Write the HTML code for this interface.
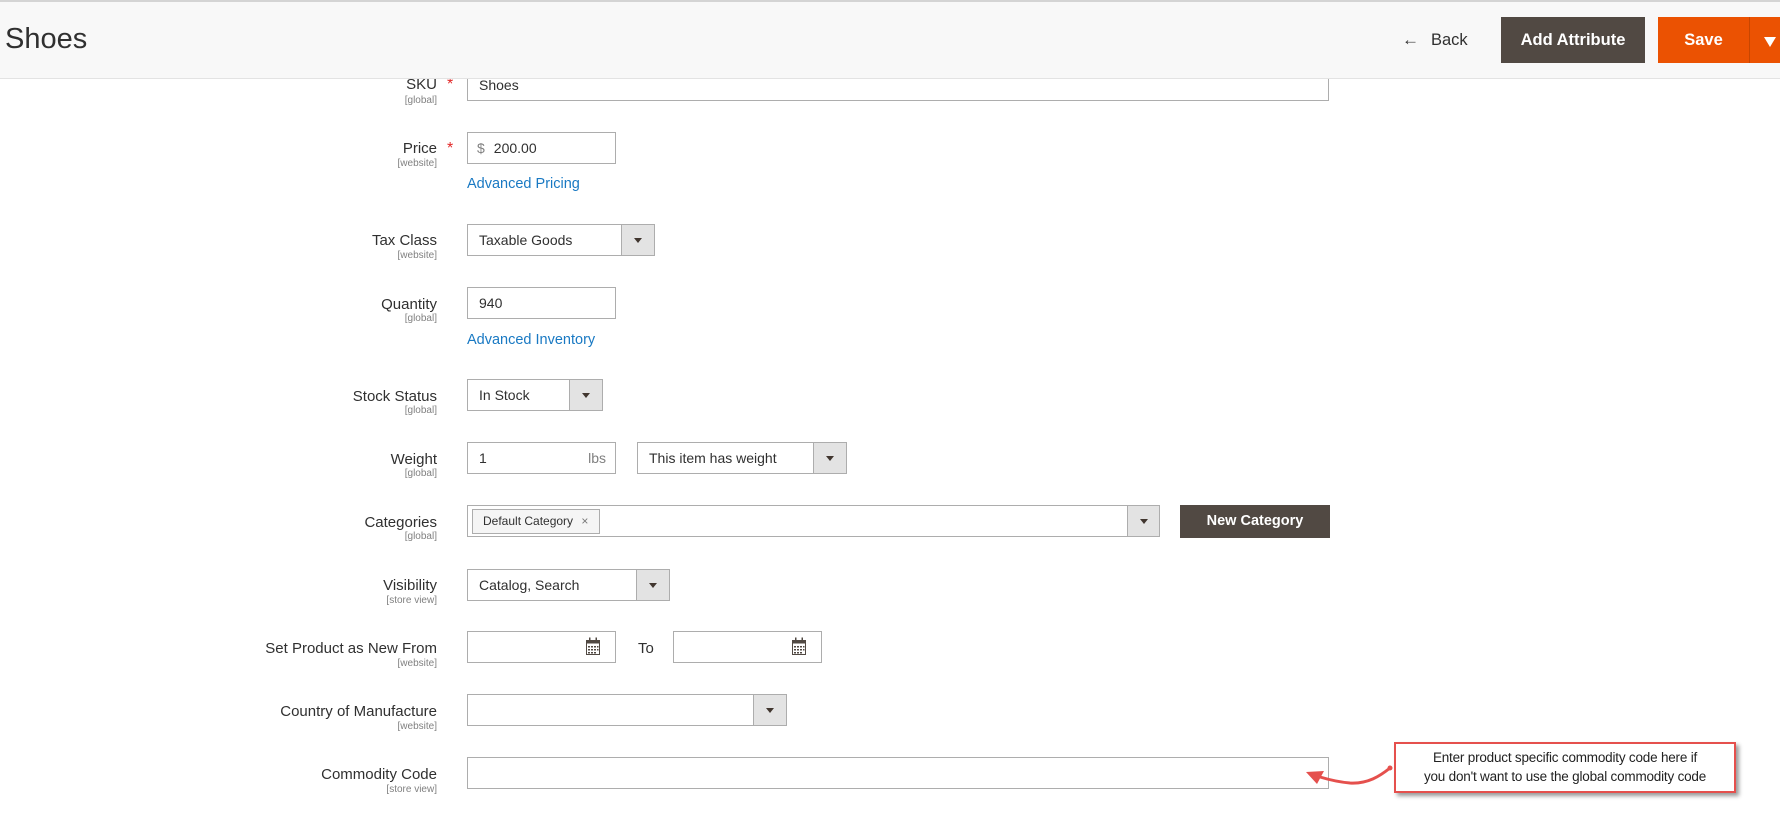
<!DOCTYPE html>
<html><head><meta charset="utf-8"><style>
*{box-sizing:border-box;margin:0;padding:0}
body{width:1780px;height:818px;overflow:hidden;background:#fff;font-family:"Liberation Sans",sans-serif;color:#303030;position:relative}
.hdr{position:absolute;left:0;top:0;width:1780px;height:79px;background:#f8f8f8;border-top:2px solid #d4d4d4;border-bottom:1px solid #e3e3e3;z-index:5}
.title{position:absolute;left:5px;top:21px;font-size:29px;color:#303030}
.back{position:absolute;left:1402px;top:28px;font-size:16.5px;color:#303030;white-space:nowrap}
.btn{position:absolute;color:#fff;font-weight:bold;font-size:16.5px;text-align:center;white-space:nowrap}
.abs{position:absolute}
.lbl{position:absolute;right:1343px;text-align:right;font-size:15px;color:#303030;white-space:nowrap}
.scope{position:absolute;right:1343px;text-align:right;font-size:10px;color:#808080;white-space:nowrap}
.in{position:absolute;border:1px solid #adadad;background:#fff;height:32px;font-size:14px;line-height:30px;padding-left:11px;white-space:nowrap}
.sel{position:absolute;border:1px solid #adadad;background:#fff;height:32px;font-size:14px;line-height:30px;padding-left:11px;white-space:nowrap}
.sel .ar{position:absolute;right:0;top:0;bottom:0;background:#e3e3e3;border-left:1px solid #adadad}
.sel .ar:after{content:"";position:absolute;left:50%;top:50%;margin:-2px 0 0 -4px;border-left:4px solid transparent;border-right:4px solid transparent;border-top:5px solid #41362f}
.link{position:absolute;left:467px;font-size:14.5px;color:#1979c3}
.req{color:#e22626;font-size:16px;position:absolute;left:447px}
</style></head><body>
<div class="hdr">
<div class="title">Shoes</div>
<div class="back"><span style="font-size:17px;margin-right:12px">&#8592;</span>Back</div>
<div class="btn" style="left:1501px;top:15px;width:144px;height:46px;line-height:46px;background:#514943">Add Attribute</div>
<div class="btn" style="left:1658px;top:15px;width:122px;height:46px;background:#eb5202"><span style="position:absolute;left:0;width:91px;line-height:46px">Save</span><span style="position:absolute;left:91px;top:0;width:1px;height:46px;background:#c84600"></span><span style="position:absolute;left:106px;top:20px;border-left:6px solid transparent;border-right:6px solid transparent;border-top:10px solid #fff"></span></div>
</div>

<!-- SKU -->
<div class="lbl" style="top:76px">SKU</div><span class="req" style="top:76px">*</span>
<div class="scope" style="top:95px">[global]</div>
<div class="in" style="left:467px;top:69px;width:862px">Shoes</div>

<!-- Price -->
<div class="lbl" style="top:140px">Price</div><span class="req" style="top:140px">*</span>
<div class="scope" style="top:158px">[website]</div>
<div class="in" style="left:467px;top:132px;width:149px;padding-left:9px"><span style="color:#808080;margin-right:9px">$</span>200.00</div>
<div class="link" style="top:176px">Advanced Pricing</div>

<!-- Tax -->
<div class="lbl" style="top:232px">Tax Class</div>
<div class="scope" style="top:250px">[website]</div>
<div class="sel" style="left:467px;top:224px;width:188px">Taxable Goods<div class="ar" style="width:33px"></div></div>

<!-- Qty -->
<div class="lbl" style="top:296px">Quantity</div>
<div class="scope" style="top:313px">[global]</div>
<div class="in" style="left:467px;top:287px;width:149px">940</div>
<div class="link" style="top:332px">Advanced Inventory</div>

<!-- Stock -->
<div class="lbl" style="top:388px">Stock Status</div>
<div class="scope" style="top:405px">[global]</div>
<div class="sel" style="left:467px;top:379px;width:136px">In Stock<div class="ar" style="width:33px"></div></div>

<!-- Weight -->
<div class="lbl" style="top:451px">Weight</div>
<div class="scope" style="top:468px">[global]</div>
<div class="in" style="left:467px;top:442px;width:149px">1<span style="position:absolute;right:9px;color:#808080">lbs</span></div>
<div class="sel" style="left:637px;top:442px;width:210px">This item has weight<div class="ar" style="width:33px"></div></div>

<!-- Categories -->
<div class="lbl" style="top:514px">Categories</div>
<div class="scope" style="top:531px">[global]</div>
<div class="sel" style="left:467px;top:505px;width:693px"><div class="ar" style="width:32px"></div></div>
<div class="abs" style="left:472px;top:509px;width:128px;height:25px;border:1px solid #adadad;background:#f5f5f5;font-size:12px;line-height:23px;padding-left:10px;color:#303030;white-space:nowrap">Default Category <span style="color:#777;margin-left:5px">×</span></div>
<div class="btn" style="left:1180px;top:505px;width:150px;height:33px;line-height:33px;background:#514943;font-size:14.5px">New Category</div>

<!-- Visibility -->
<div class="lbl" style="top:577px">Visibility</div>
<div class="scope" style="top:595px">[store view]</div>
<div class="sel" style="left:467px;top:569px;width:203px">Catalog, Search<div class="ar" style="width:33px"></div></div>

<!-- New from -->
<div class="lbl" style="top:640px">Set Product as New From</div>
<div class="scope" style="top:658px">[website]</div>
<div class="in" style="left:467px;top:631px;width:149px"></div>
<div class="abs" style="left:638px;top:640px;font-size:15px">To</div>
<div class="in" style="left:673px;top:631px;width:149px"></div>
<svg class="abs" style="left:586px;top:637px" width="14" height="18" viewBox="0 0 14 18"><rect x="0.5" y="3.5" width="13" height="14" fill="#fff" stroke="#514943"/><rect x="0.5" y="3.5" width="13" height="3" fill="#514943"/><rect x="3" y="0.5" width="1.5" height="5" fill="#514943"/><rect x="9.5" y="0.5" width="1.5" height="5" fill="#514943"/><g fill="#514943"><rect x="2" y="9" width="2" height="1.5"/><rect x="5" y="9" width="2" height="1.5"/><rect x="8" y="9" width="2" height="1.5"/><rect x="11" y="9" width="1.5" height="1.5"/><rect x="2" y="12" width="2" height="1.5"/><rect x="5" y="12" width="2" height="1.5"/><rect x="8" y="12" width="2" height="1.5"/><rect x="11" y="12" width="1.5" height="1.5"/><rect x="2" y="15" width="2" height="1.5"/><rect x="5" y="15" width="2" height="1.5"/><rect x="8" y="15" width="2" height="1.5"/></g></svg>
<svg class="abs" style="left:792px;top:637px" width="14" height="18" viewBox="0 0 14 18"><rect x="0.5" y="3.5" width="13" height="14" fill="#fff" stroke="#514943"/><rect x="0.5" y="3.5" width="13" height="3" fill="#514943"/><rect x="3" y="0.5" width="1.5" height="5" fill="#514943"/><rect x="9.5" y="0.5" width="1.5" height="5" fill="#514943"/><g fill="#514943"><rect x="2" y="9" width="2" height="1.5"/><rect x="5" y="9" width="2" height="1.5"/><rect x="8" y="9" width="2" height="1.5"/><rect x="11" y="9" width="1.5" height="1.5"/><rect x="2" y="12" width="2" height="1.5"/><rect x="5" y="12" width="2" height="1.5"/><rect x="8" y="12" width="2" height="1.5"/><rect x="11" y="12" width="1.5" height="1.5"/><rect x="2" y="15" width="2" height="1.5"/><rect x="5" y="15" width="2" height="1.5"/><rect x="8" y="15" width="2" height="1.5"/></g></svg>

<!-- Country -->
<div class="lbl" style="top:703px">Country of Manufacture</div>
<div class="scope" style="top:721px">[website]</div>
<div class="sel" style="left:467px;top:694px;width:320px"><div class="ar" style="width:33px"></div></div>

<!-- Commodity -->
<div class="lbl" style="top:766px">Commodity Code</div>
<div class="scope" style="top:784px">[store view]</div>
<div class="in" style="left:467px;top:757px;width:862px"></div>

<!-- callout -->
<svg class="abs" style="left:1300px;top:760px" width="95" height="30" viewBox="0 0 95 30"><path d="M90 8 C80 16 68 24 50 23 C38 22 30 20 20 17" fill="none" stroke="#e5504d" stroke-width="3"/><path d="M6 12 L24 11 L17 24 Z" fill="#e5504d"/><circle cx="90" cy="8" r="2.5" fill="#e5504d"/></svg>
<div class="abs" style="left:1394px;top:742px;width:342px;height:51px;border:2px solid #e5504d;background:#fff;box-shadow:3px 3px 4px rgba(0,0,0,.4);font-size:13.5px;line-height:19px;text-align:center;padding-top:4px;color:#222;white-space:nowrap;letter-spacing:-0.2px">Enter product specific commodity code here if<br>you don't want to use the global commodity code</div>
</body></html>
